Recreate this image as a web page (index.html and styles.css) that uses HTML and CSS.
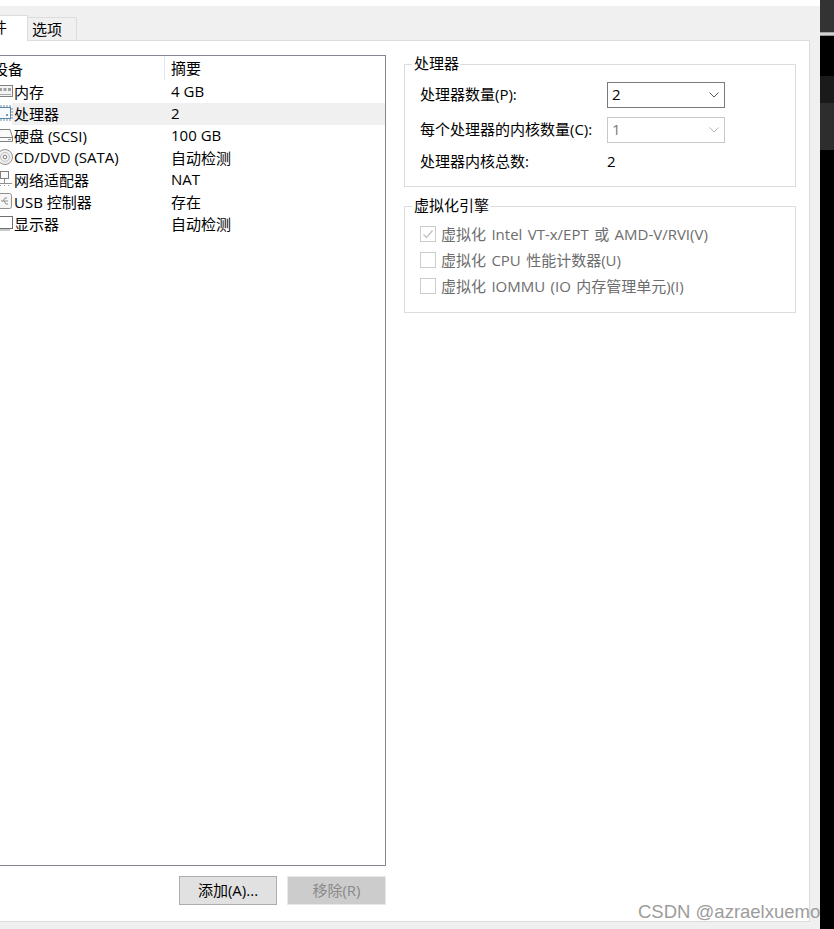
FILE: index.html
```html
<!DOCTYPE html>
<html lang="zh-CN">
<head>
<meta charset="utf-8">
<title>虚拟机设置</title>
<link rel="stylesheet" href="styles.css">
</head>
<body>
<div class="window">
  <main class="dialog">
    <div class="topline"></div>
    <div class="tabs">
      <div class="tab tab-active">硬件</div>
      <div class="tab">选项</div>
    </div>
    <div class="panel">
      <section class="left">
        <div class="listbox">
          <div class="list-head">
            <div class="col-device">设备</div>
            <div class="col-summary">摘要</div>
          </div>
          <div class="row">
            <div class="col-device">
              <svg class="icon" viewBox="0 0 16 16"><rect x="0.5" y="2.5" width="15" height="11" fill="#f4f4f4" stroke="#808080"/><path d="M2 5h3v3H2zM6.500 5h3v3h-3zM11 5h3v3h-3z" fill="#a0a0a0"/><path d="M2 11.500h12" stroke="#aaa"/></svg>
              <span>内存</span>
            </div>
            <div class="col-summary">4 GB</div>
          </div>
          <div class="row row-selected">
            <div class="col-device">
              <svg class="icon" viewBox="0 0 16 16"><rect x="2.500" y="2.500" width="11" height="11" fill="#f6fafd" stroke="#5a87a8"/><path d="M0 4h2M0 7h2M0 10h2M0 13h2M14 4h2M14 7h2M14 10h2M14 13h2M4 0v2M7 0v2M10 0v2M13 0v2M4 14v2M7 14v2M10 14v2M13 14v2" stroke="#6d8fa8"/><rect x="9" y="9" width="2" height="2" fill="#7a9ab2"/></svg>
              <span>处理器</span>
            </div>
            <div class="col-summary">2</div>
          </div>
          <div class="row">
            <div class="col-device">
              <svg class="icon" viewBox="0 0 16 16"><path d="M3 2.500h10l2.500 7.500v4.500H.5V10z" fill="#fafafa" stroke="#808080"/><path d="M1 10.500h14" stroke="#808080"/><path d="M11 12.500h3" stroke="#999"/></svg>
              <span>硬盘 (SCSI)</span>
            </div>
            <div class="col-summary">100 GB</div>
          </div>
          <div class="row">
            <div class="col-device">
              <svg class="icon" viewBox="0 0 16 16"><circle cx="8" cy="8" r="7.500" fill="#f1f1f1" stroke="#909090"/><circle cx="8" cy="8" r="4.500" fill="none" stroke="#c0c0c0"/><circle cx="8" cy="8" r="1.800" fill="#fff" stroke="#808080"/></svg>
              <span>CD/DVD (SATA)</span>
            </div>
            <div class="col-summary">自动检测</div>
          </div>
          <div class="row">
            <div class="col-device">
              <svg class="icon" viewBox="0 0 16 16"><rect x="3.500" y="0.500" width="8" height="7" fill="#fafafa" stroke="#808080"/><path d="M7.500 8v4M0 12.500h15" fill="none" stroke="#909090"/><path d="M7 14h1v1H7zM3 14h1v1H3zM11 14h1v1h-1z" fill="#a0a0a0"/></svg>
              <span>网络适配器</span>
            </div>
            <div class="col-summary">NAT</div>
          </div>
          <div class="row">
            <div class="col-device">
              <svg class="icon" viewBox="0 0 16 16"><rect x="0.500" y="0.500" width="14" height="15" rx="2" fill="#f6f6f6" stroke="#909090"/><path d="M4 8h7M6 8l2-3h2M7 8l2 3h2" fill="none" stroke="#909090"/></svg>
              <span>USB 控制器</span>
            </div>
            <div class="col-summary">存在</div>
          </div>
          <div class="row">
            <div class="col-device">
              <svg class="icon" viewBox="0 0 16 16"><rect x="0.500" y="1.500" width="15" height="12" fill="#fff" stroke="#707070"/><path d="M3 15h10" stroke="#909090"/></svg>
              <span>显示器</span>
            </div>
            <div class="col-summary">自动检测</div>
          </div>
        </div>
        <div class="actions">
          <button class="btn" type="button">添加(A)...</button>
          <button class="btn btn-disabled" type="button" disabled>移除(R)</button>
        </div>
      </section>
      <section class="right">
        <fieldset class="group group-cpu">
          <legend>处理器</legend>
          <div class="field">
            <span class="field-label">处理器数量(P):</span>
            <div class="combo combo-focus"><span>2</span><svg class="chev" viewBox="0 0 10 6"><path d="M0.500 0.500L5 5l4.500-4.500" fill="none" stroke="#555"/></svg></div>
          </div>
          <div class="field">
            <span class="field-label">每个处理器的内核数量(C):</span>
            <div class="combo combo-off"><span>1</span><svg class="chev" viewBox="0 0 10 6"><path d="M0.500 0.500L5 5l4.500-4.500" fill="none" stroke="#b5b5b5"/></svg></div>
          </div>
          <div class="field field-total">
            <span class="field-label">处理器内核总数:</span>
            <span class="total">2</span>
          </div>
        </fieldset>
        <fieldset class="group group-virt">
          <legend>虚拟化引擎</legend>
          <div class="check">
            <span class="box"><svg viewBox="0 0 14 14"><path d="M2.500 7.500l3 3 6-7" fill="none" stroke="#c4c4c4" stroke-width="1.500"/></svg></span>
            <span class="check-text">虚拟化 Intel VT-x/EPT 或 AMD-V/RVI(V)</span>
          </div>
          <div class="check"><span class="box"></span><span class="check-text">虚拟化 CPU 性能计数器(U)</span></div>
          <div class="check"><span class="box"></span><span class="check-text">虚拟化 IOMMU (IO 内存管理单元)(I)</span></div>
        </fieldset>
      </section>
    </div>
    <div class="watermark">CSDN @azraelxuemo</div>
  </main>
  <aside class="strip">
    <div class="s1"></div>
    <div class="s2"></div>
    <div class="s3"></div>
    <div class="s4"></div>
    <div class="s5"></div>
    <div class="s6"></div>
  </aside>
</div>
</body>
</html>
```
FILE: styles.css
```css
* { box-sizing: border-box; }
html, body { margin: 0; padding: 0; background: #000; }
body {
  font-family: "Open Sans", "Noto Sans CJK SC", sans-serif;
  font-size: 15px;
  color: #000;
}
.window {
  display: flex;
  width: 834px;
  height: 929px;
  overflow: hidden;
}
.dialog {
  position: relative;
  width: 820px;
  height: 929px;
  flex: none;
  background: #f0f0f0;
  overflow: hidden;
}
.topline { height: 6px; background: #fff; }

.tabs {
  display: flex;
  align-items: flex-end;
  height: 34px;
  margin-left: -30px;
}
.tab {
  height: 23px;
  width: 50px;
  margin-left: -1px;
  border: 1px solid #dcdcdc;
  border-bottom: 0;
  background: #f0f0f0;
  line-height: 22px;
  padding-left: 4px;
}
.tab-active {
  position: relative;
  z-index: 1;
  width: 58px;
  height: 26px;
  margin-bottom: -1px;
  margin-left: 0;
  background: #fff;
  line-height: 23px;
  padding-left: 6px;
}
.panel {
  display: flex;
  width: 831px;
  height: 882px;
  margin-left: -21px;
  padding: 14px 0 0 0;
  background: #fff;
  border: 1px solid #dcdcdc;
}
.left {
  width: 396px;
  margin-left: 10px;
  flex: none;
  display: flex;
  flex-direction: column;
  margin-right: 18px;
}
.listbox {
  height: 811px;
  border: 1px solid #828790;
  background: #fff;
}
.list-head {
  display: flex;
  height: 25px;
  align-items: center;
  padding-bottom: 1px;
}
.list-head .col-summary {
  height: 24px;
  line-height: 24px;
  border-left: 1px solid #e5e5e5;
  padding-left: 6px;
  margin-left: -1px;
  width: 221px;
}
.list-head .col-device { padding-left: 2px; }
.col-device {
  width: 174px;
  flex: none;
  display: flex;
  align-items: center;
  overflow: hidden;
}
.col-summary { padding-left: 6px; }
.row {
  display: flex;
  align-items: center;
  height: 22px;
  padding-bottom: 2px;
}
.row .col-device span { margin-left: 1px; }
.row-selected { background: linear-gradient(90deg, #fff 21px, #f0f0f0 21px); }
.icon {
  width: 16px;
  height: 16px;
  flex: none;
  margin-left: 6px;
}
.actions {
  display: flex;
  justify-content: flex-end;
  gap: 10px;
  margin-top: 10px;
}
.btn {
  width: 98px;
  height: 29px;
  padding: 0 0 2px;
  font: inherit;
  color: #000;
  background: #e1e1e1;
  border: 1px solid #adadad;
}
.btn-disabled {
  width: 99px;
  background: #cccccc;
  border-color: #e8e8e8;
  color: #8a8a8a;
}

.right {
  width: 392px;
  flex: none;
  display: flex;
  flex-direction: column;
}
.group {
  margin: 0;
  padding: 0;
  border: 1px solid #dcdcdc;
  min-width: 0;
}
.group legend {
  margin-left: -8px;
  padding: 0 1px 0 2px;
  line-height: 17px;
  height: 19px;
}
.group-cpu { height: 132px; padding: 8px 0 0 15px; }
.group-virt { height: 116px; margin-top: 10px; padding: 5px 0 0 15px; }
.field {
  display: flex;
  align-items: center;
  height: 26px;
  margin-bottom: 9px;
}
.field-total { height: 20px; margin: 0; }
.field-label { width: 187px; flex: none; white-space: nowrap; padding-bottom: 3px; }
.total { padding-bottom: 2px; }
.combo {
  width: 118px;
  height: 26px;
  display: flex;
  align-items: center;
  justify-content: space-between;
  padding: 0 5px 0 4px;
  background: #fff;
}
.combo span { padding-bottom: 3px; }
.combo-focus { border: 1px solid #7a7a7a; }
.combo-off { border: 1px solid #c8c8c8; color: #7a7a7a; }
.chev { width: 10px; height: 6px; }
.check {
  display: flex;
  align-items: center;
  height: 26px;
  color: #6d6d6d;
  white-space: nowrap;
  word-spacing: 1.500px;
}
.check-text { padding-bottom: 2px; }
.box {
  width: 16px;
  height: 16px;
  flex: none;
  margin-right: 5px;
  border: 1px solid #cccccc;
  background: #fff;
  display: flex;
}
.box svg { width: 14px; height: 14px; }

.watermark {
  position: absolute;
  left: 638px;
  top: 901px;
  font-family: "Liberation Sans", sans-serif;
  font-size: 18.500px;
  line-height: 22px;
  color: #9c9c9c;
  white-space: nowrap;
}

.strip { width: 14px; flex: none; background: #000; }
.s1 { height: 32px; background: #333; }
.s2 { height: 4px; background: linear-gradient(#888, #eee 50%, #777); }
.s3 { height: 40px; background: #000; }
.s4 { height: 27px; background: #1a1a1a; }
.s5 { height: 47px; background: #2d2d2d; }
.s6 { height: 779px; background: #000; }
```
